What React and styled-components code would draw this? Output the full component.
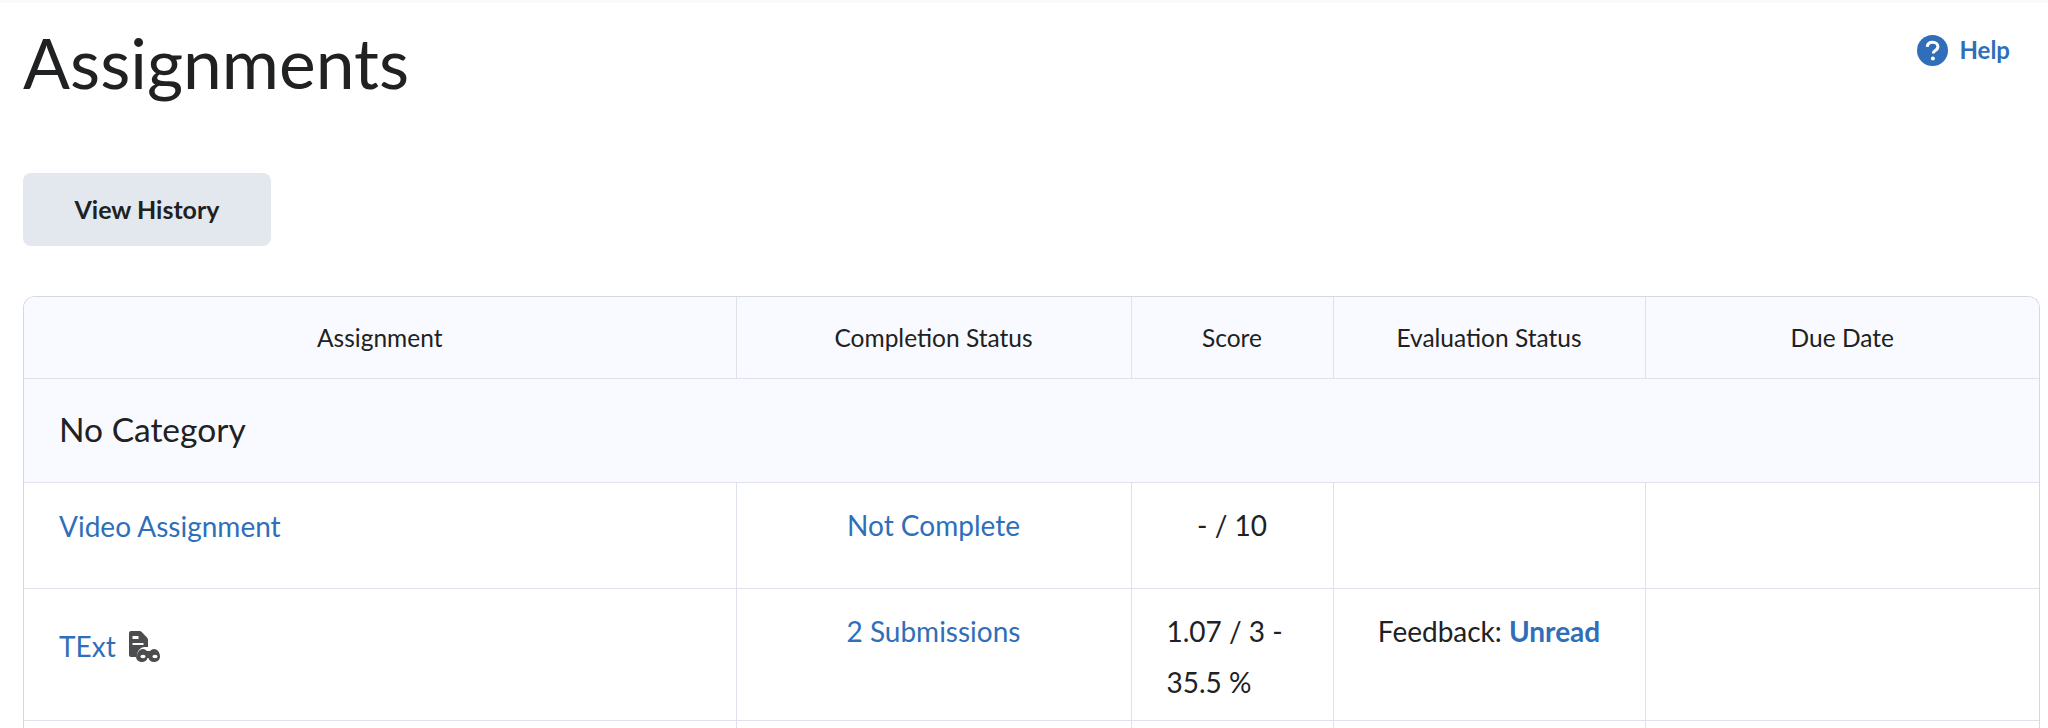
import React from 'react'
import styled, { createGlobalStyle } from 'styled-components'

const GlobalStyle = createGlobalStyle`
	html, body {
		margin: 0;
		padding: 0;
		background: #fff;
		overflow: hidden;
	}
	body {
		font-family: Lato, "Liberation Sans", sans-serif;
		color: #202122;
	}
`

const Page = styled.div`
	height: 728px;
	overflow: hidden;
	border-top: 3px solid #f9f9f9;
	box-sizing: border-box;
	padding: 0 8px 0 23px;
`

const TitleRow = styled.div`
	display: flex;
	justify-content: space-between;
	align-items: flex-start;
	height: 170px;
	padding-right: 30px;
`

const Title = styled.h1`
	margin: 17px 0 0;
	font-size: 69.5px;
	font-weight: 400;
	line-height: 84px;
	letter-spacing: 0;
`

const HelpLink = styled.a`
	display: flex;
	align-items: center;
	gap: 11px;
	margin-top: 31px;
	color: #2f6fba;
	font-size: 24px;
	font-weight: 700;
	line-height: 32px;
`

const HistoryButton = styled.button`
	display: block;
	width: 248px;
	height: 73px;
	padding: 0 0 1px;
	border: 0;
	border-radius: 8px;
	background: #e3e8ef;
	color: #202122;
	font-family: inherit;
	font-size: 25px;
	font-weight: 700;
`

const TableWrap = styled.div`
	margin-top: 50px;
	border: 1px solid #d5d9e4;
	border-bottom: 0;
	border-radius: 12px 12px 0 0;
	overflow: hidden;
`

const Table = styled.table`
	width: 100%;
	table-layout: fixed;
	border-collapse: collapse;
`

const HeadCell = styled.th`
	height: 81px;
	padding: 0;
	background: #f9faff;
	border-left: 1px solid #dfe2ec;
	border-bottom: 1px solid #dfe2ec;
	font-size: 24.5px;
	font-weight: 400;
	text-align: center;

	&:first-child {
		border-left: 0;
	}
`

const CategoryCell = styled.td`
	height: 104px;
	padding: 0 0 3px 35px;
	box-sizing: border-box;
	background: #f9faff;
	border-bottom: 1px solid #dfe2ec;
	font-size: 33.5px;
`

const Cell = styled.td`
	height: ${(p) => p.$height}px;
	box-sizing: border-box;
	padding: ${(p) => p.$paddingTop || 0}px ${(p) => (p.$left ? 35 : 20)}px 0;
	border-left: 1px solid #dfe2ec;
	border-bottom: 1px solid #dfe2ec;
	text-align: ${(p) => (p.$left ? 'left' : 'center')};
	vertical-align: top;
	line-height: 51px;
	font-size: 28px;

	&:first-child {
		border-left: 0;
	}
`

const ScoreCell = styled(Cell)`
	text-align: left;
	padding-left: 35px;
	padding-right: 20px;
`

const Link = styled.a`
	color: #2f6fba;
	font-weight: ${(p) => (p.$bold ? 700 : 400)};
`

const TitleLine = styled.span`
	display: inline-flex;
	align-items: center;
	gap: 13px;
`

const HelpIcon = () => (
	<svg width="31" height="31" viewBox="0 0 31 31" aria-hidden="true">
		<circle cx="15.5" cy="15.5" r="15.5" fill="#2f6fba" />
		<path
			d="M10.2 11.8c.3-3 2.5-4.6 5.4-4.6 3 0 5.3 1.8 5.3 4.4 0 2-1 3-2.600 4-1.300.8-2 1.400-2 2.800"
			fill="none"
			stroke="#fff"
			strokeWidth="3"
		/>
		<circle cx="15.9" cy="23.6" r="2" fill="#fff" />
	</svg>
)

const AnonymousIcon = () => (
	<svg width="32" height="32" viewBox="0 0 32 32" aria-hidden="true">
		<path
			d="M0 2a2 2 0 0 1 2-2h8.500c1 0 1.600.4 2.200 1l5.300 5.500c.6.6 1 1.300 1 2.200v7.300c-3.500-.2-5.800.2-7.600 1.500-2.200 1.500-3.400 4.500-3.700 8.500H2a2 2 0 0 1-2-2z"
			fill="#4c4d4f"
		/>
		<path d="M3.500 5h6v3h-6zM3.500 12h11v2h-11z" fill="#fff" />
		<path
			d="M8 25.500c0-4 2.800-7.500 6-7.500 2 0 3 1 3.800 2h3.400c.8-1 1.800-2 3.800-2 3.200 0 6 3.500 6 7.500 0 3.300-2.700 5.500-6 5.500-2.800 0-4.800-1.600-5.500-4h-1c-.7 2.400-2.700 4-5.500 4-3.300 0-6-2.200-6-5.500z"
			fill="#4c4d4f"
		/>
		<ellipse cx="14" cy="25.500" rx="2.600" ry="1.800" fill="#fff" />
		<ellipse cx="26" cy="25.500" rx="2.600" ry="1.800" fill="#fff" />
	</svg>
)

const columns = [
	{ label: 'Assignment', width: 712 },
	{ label: 'Completion Status', width: 395 },
	{ label: 'Score', width: 202 },
	{ label: 'Evaluation Status', width: 312 },
	{ label: 'Due Date' },
]

const App = () => (
	<>
		<GlobalStyle />
		<Page>
			<TitleRow>
				<Title>Assignments</Title>
				<HelpLink>
					<HelpIcon />
					Help
				</HelpLink>
			</TitleRow>
			<HistoryButton>View History</HistoryButton>
			<TableWrap>
				<Table>
					<colgroup>
						{columns.map((c) => (
							<col key={c.label} style={c.width ? { width: c.width } : undefined} />
						))}
					</colgroup>
					<thead>
						<tr>
							{columns.map((c) => (
								<HeadCell key={c.label}>{c.label}</HeadCell>
							))}
						</tr>
					</thead>
					<tbody>
						<tr>
							<CategoryCell colSpan={5}>No Category</CategoryCell>
						</tr>
						<tr>
							<Cell $left $height={106} $paddingTop={18}>
								<Link>Video Assignment</Link>
							</Cell>
							<Cell $height={106} $paddingTop={17}>
								<Link>Not Complete</Link>
							</Cell>
							<Cell $height={106} $paddingTop={17}>- / 10</Cell>
							<Cell $height={106} />
							<Cell $height={106} />
						</tr>
						<tr>
							<Cell $left $height={132} $paddingTop={32}>
								<TitleLine>
									<Link>TExt</Link>
									<AnonymousIcon />
								</TitleLine>
							</Cell>
							<Cell $height={132} $paddingTop={17}>
								<Link>2 Submissions</Link>
							</Cell>
							<ScoreCell $height={132} $paddingTop={17}>
								1.07 / 3 - 35.5 %
							</ScoreCell>
							<Cell $height={132} $paddingTop={17}>
								Feedback: <Link $bold>Unread</Link>
							</Cell>
							<Cell $height={132} />
						</tr>
						<tr>
							<Cell $height={60} />
							<Cell $height={60} />
							<Cell $height={60} />
							<Cell $height={60} />
							<Cell $height={60} />
						</tr>
					</tbody>
				</Table>
			</TableWrap>
		</Page>
	</>
)

export default App
